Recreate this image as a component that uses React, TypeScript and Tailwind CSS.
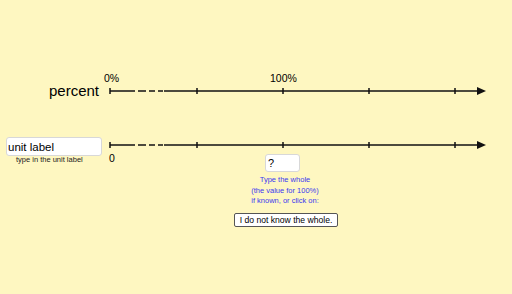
import React from "react";

function NumberLine() {
  // drawn from x=100 of the page, line at y=7
  const ticks = [97, 183, 269, 355];
  return (
    <svg width={390} height={14} viewBox="0 0 390 14" className="block shrink-0">
      <g stroke="#111" strokeWidth={1.5} fill="none">
        <line x1={10} y1={7} x2={35} y2={7} />
        <line x1={38} y1={7} x2={46} y2={7} />
        <line x1={49} y1={7} x2={55} y2={7} />
        <line x1={58} y1={7} x2={63} y2={7} />
        <line x1={64} y1={7} x2={379} y2={7} />
        <line x1={10} y1={4} x2={10} y2={10} />
        {ticks.map((x) => (
          <line key={x} x1={x} y1={4} x2={x} y2={10} />
        ))}
      </g>
      <polygon points="377,3 386,7 377,11" fill="#111" />
    </svg>
  );
}

export default function App() {
  return (
    <div className="w-[512px] h-[294px] overflow-hidden bg-[#fef7c1] font-['Liberation_Sans',Arial,sans-serif] text-black">
      {/* percent line */}
      <div className="pt-[72px]">
        <div className="flex h-[12px] text-[10.5px] leading-[12px]">
          <span className="ml-[104px] w-[166px]">0%</span>
          <span>100%</span>
        </div>
        <div className="flex items-center h-[14px]">
          <span className="w-[99px] text-right text-[15px] leading-[14px]">percent</span>
          <div className="ml-[1px]">
            <NumberLine />
          </div>
        </div>
      </div>

      {/* unit line */}
      <div className="flex mt-[39px]">
        <div className="w-[100px] shrink-0">
          <input
            defaultValue="unit label"
            className="block ml-[6px] w-[96px] h-[19px] bg-white border border-[#d8d8d8] rounded-[3px] pl-[1px] text-[11.5px] text-black outline-none"
          />
          <div className="ml-[16px] text-[7.5px] leading-[8px] text-[#222]">type in the unit label</div>
        </div>
        <div className="flex flex-col mt-[1px]">
          <NumberLine />
          <div className="flex">
            <div className="w-[130px] shrink-0 pl-[9px] text-[10.5px] leading-[12px]">0</div>
            <div className="w-[110px] flex flex-col items-center">
              <input
                defaultValue="?"
                className="block self-start ml-[35px] mt-[2px] w-[35px] h-[18px] bg-white border border-[#d8d8d8] rounded-[3px] pl-[2px] text-[11px] text-black outline-none"
              />
              <div className="mt-[3px] text-center text-[7.5px] leading-[10.7px] text-[#3a3af0] whitespace-nowrap">
                <div>Type the whole</div>
                <div>(the value for 100%)</div>
                <div>if known, or click on:</div>
              </div>
              <button className="mt-[6px] ml-[2px] w-[104px] h-[14px] bg-white border border-[#555] rounded-[2px] text-[8.6px] leading-[12px] text-black whitespace-nowrap">
                I do not know the whole.
              </button>
            </div>
          </div>
        </div>
      </div>
    </div>
  );
}
